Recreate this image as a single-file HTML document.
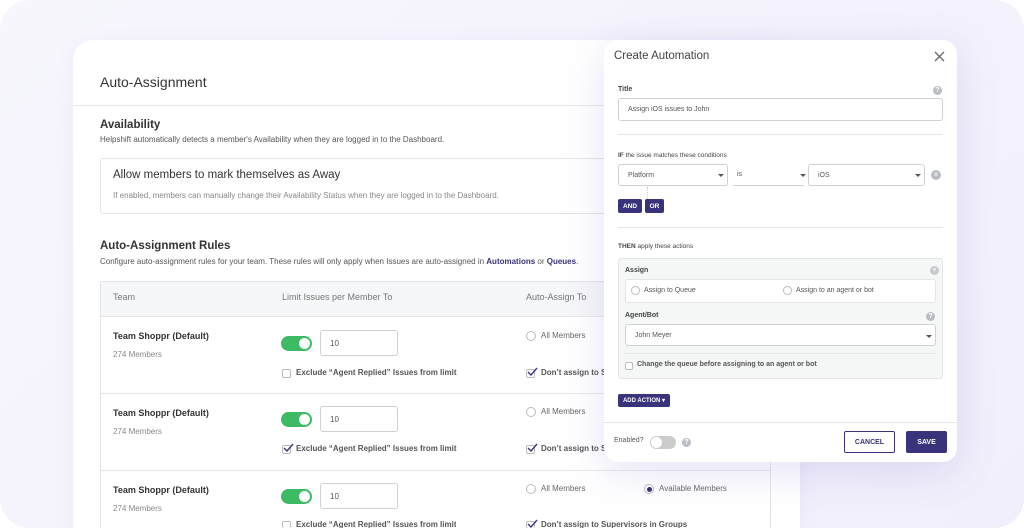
<!DOCTYPE html>
<html><head><meta charset="utf-8"><style>
*{box-sizing:border-box;margin:0;padding:0}
html,body{width:1024px;height:528px;overflow:hidden}
body{background:#fff;font-family:"Liberation Sans",sans-serif;position:relative;color:#333}
#root{position:absolute;left:0;top:0;width:1024px;height:528px;overflow:hidden}
.bg{position:absolute;left:0;top:0;width:1024px;height:528px;border-radius:30px;background:linear-gradient(135deg,#f7f6fd,#f1effb)}
.card{position:absolute;left:73px;top:40px;width:727px;height:488px;background:#fff;border-radius:20px 20px 0 0;box-shadow:0 4px 20px rgba(120,110,200,.08);overflow:hidden}
.a{position:absolute;white-space:nowrap}
.h1{font-size:14px;color:#333}
.h2{font-size:11.5px;color:#333;font-weight:bold}
.sm{font-size:8px;color:#555}
.gray{color:#888}
.line{position:absolute;height:1px;background:#e6e6e9}
.tog{position:absolute;width:31px;height:15px;border-radius:8px;background:#3dbb64}
.tog:after{content:"";position:absolute;right:2px;top:2px;width:11px;height:11px;border-radius:50%;background:#fff}
.inp{position:absolute;border:1px solid #cfd1d4;border-radius:3px;background:#fff;font-size:8px;color:#555;padding-left:9px;display:flex;align-items:center}
.cb{position:absolute;width:9px;height:9px;border:1px solid #bbb;border-radius:2px;background:#fff}
.ck{position:absolute;width:11px;height:9px}
.rd{position:absolute;width:10px;height:10px;border:1px solid #bbb;border-radius:50%;background:#fff}
.t8{font-size:8px;color:#444}
.modal{position:absolute;left:604px;top:40px;width:353px;height:422px;background:#fff;border-radius:14px;box-shadow:0 10px 40px rgba(110,100,200,.18)}
.btn{position:absolute;background:#38337a;color:#fff;font-size:6.5px;font-weight:bold;display:flex;align-items:center;justify-content:center;border-radius:2px}
.caret{position:absolute;width:0;height:0;border-left:3px solid transparent;border-right:3px solid transparent;border-top:3px solid #555}
.q{position:absolute;width:9px;height:9px;border-radius:50%;background:#b9bec4;color:#fff;font-size:7px;font-weight:bold;text-align:center;line-height:9px}
</style></head><body>
<div id="root">
<div class="bg"></div>
<div class="card">
 <div class="a h1" style="left:27px;top:34px">Auto-Assignment</div>
 <div class="line" style="left:0;top:65px;width:727px"></div>
 <div class="a h2" style="left:27px;top:79px">Availability</div>
 <div class="a sm" style="left:27px;top:95px">Helpshift automatically detects a member's Availability when they are logged in to the Dashboard.</div>
 <div style="position:absolute;left:27px;top:118px;width:690px;height:56px;border:1px solid #e2e3e6;border-radius:3px"></div>
 <div class="a" style="left:40px;top:129px;font-size:11.5px;color:#333">Allow members to mark themselves as Away</div>
 <div class="a sm gray" style="left:40px;top:151px">If enabled, members can manually change their Availability Status when they are logged in to the Dashboard.</div>
 <div class="a h2" style="left:27px;top:200px">Auto-Assignment Rules</div>
 <div class="a sm" style="left:27px;top:217px">Configure auto-assignment rules for your team. These rules will only apply when Issues are auto-assigned in <b style="color:#38337a">Automations</b> or <b style="color:#38337a">Queues</b>.</div>
 <div style="position:absolute;left:27px;top:241px;width:671px;height:260px;border:1px solid #e2e3e6;border-radius:3px"></div>
 <div style="position:absolute;left:28px;top:242px;width:669px;height:35px;background:#f6f7f8;border-bottom:1px solid #e6e6e9"></div>
 <div class="a" style="left:40px;top:252px;font-size:9px;color:#777">Team</div>
 <div class="a" style="left:209px;top:252px;font-size:9px;color:#777">Limit Issues per Member To</div>
 <div class="a" style="left:453px;top:252px;font-size:9px;color:#777">Auto-Assign To</div>
 <div class="line" style="left:28px;top:353px;width:669px"></div>
 <div class="line" style="left:28px;top:430px;width:669px"></div>
</div>
<svg width="0" height="0" style="position:absolute"><defs><symbol id="ck" viewBox="0 0 11 9"><path d="M1 5L4 8L10 1" fill="none" stroke="#3a3580" stroke-width="1.4"/></symbol></defs></svg>
 <div class="a" style="left:113px;top:331px;font-size:9px;font-weight:bold;color:#333">Team Shoppr (Default)</div>
 <div class="a" style="left:113px;top:350px;font-size:8px;color:#888">274 Members</div>
 <div class="tog" style="left:281px;top:336px"></div>
 <div class="inp" style="left:320px;top:330px;width:78px;height:26px">10</div>
 <div class="cb" style="left:282px;top:369px"></div>
 <div class="a t8" style="left:296px;top:368px;font-weight:bold;color:#555">Exclude “Agent Replied” Issues from limit</div>
 <div class="rd" style="left:526px;top:331px"></div>
 <div class="a t8" style="left:541px;top:331px;color:#666">All Members</div>
 <div class="cb" style="left:526px;top:369px"></div><svg class="ck" style="left:527px;top:367px"><use href="#ck"/></svg>
 <div class="a t8" style="left:541px;top:368px;font-weight:bold;color:#555">Don’t assign to S</div>

 <div class="a" style="left:113px;top:408px;font-size:9px;font-weight:bold;color:#333">Team Shoppr (Default)</div>
 <div class="a" style="left:113px;top:427px;font-size:8px;color:#888">274 Members</div>
 <div class="tog" style="left:281px;top:412px"></div>
 <div class="inp" style="left:320px;top:406px;width:78px;height:26px">10</div>
 <div class="cb" style="left:282px;top:445px"></div><svg class="ck" style="left:283px;top:443px"><use href="#ck"/></svg>
 <div class="a t8" style="left:296px;top:444px;font-weight:bold;color:#555">Exclude “Agent Replied” Issues from limit</div>
 <div class="rd" style="left:526px;top:407px"></div>
 <div class="a t8" style="left:541px;top:407px;color:#666">All Members</div>
 <div class="cb" style="left:526px;top:445px"></div><svg class="ck" style="left:527px;top:443px"><use href="#ck"/></svg>
 <div class="a t8" style="left:541px;top:444px;font-weight:bold;color:#555">Don’t assign to S</div>

 <div class="a" style="left:113px;top:485px;font-size:9px;font-weight:bold;color:#333">Team Shoppr (Default)</div>
 <div class="a" style="left:113px;top:504px;font-size:8px;color:#888">274 Members</div>
 <div class="tog" style="left:281px;top:489px"></div>
 <div class="inp" style="left:320px;top:483px;width:78px;height:26px">10</div>
 <div class="cb" style="left:282px;top:521px;height:7px;border-bottom:none"></div>
 <div class="a t8" style="left:296px;top:520px;font-weight:bold;color:#555;height:8px;overflow:hidden;line-height:10px">Exclude “Agent Replied” Issues from limit</div>
 <div class="rd" style="left:526px;top:484px"></div>
 <div class="a t8" style="left:541px;top:484px;color:#666">All Members</div>
 <div class="rd" style="left:644px;top:484px"></div><div style="position:absolute;left:647px;top:487px;width:5px;height:5px;border-radius:50%;background:#38337a"></div>
 <div class="a t8" style="left:659px;top:484px;color:#666">Available Members</div>
 <div class="cb" style="left:526px;top:521px;height:7px;border-bottom:none"></div><svg class="ck" style="left:527px;top:519px;height:9px"><use href="#ck"/></svg>
 <div class="a t8" style="left:541px;top:520px;font-weight:bold;color:#555;height:8px;overflow:hidden;line-height:10px">Don’t assign to Supervisors in Groups</div>
<div class="modal">
 <div class="a" style="left:10px;top:10px;font-size:11.5px;color:#444">Create Automation</div>
 <svg style="position:absolute;left:330px;top:11px" width="11" height="11"><path d="M1 1L10 10M10 1L1 10" stroke="#666" stroke-width="1.3"/></svg>
 <div class="a" style="left:14px;top:46px;font-size:7px;font-weight:bold;color:#444">Title</div>
 <div class="q" style="left:329px;top:46px">?</div>
 <div class="inp" style="left:14px;top:58px;width:325px;height:23px;font-size:7px">Assign iOS issues to John</div>
 <div class="line" style="left:14px;top:94px;width:325px"></div>
 <div class="a" style="left:14px;top:112px;font-size:6.5px;color:#444"><b>IF</b> the issue matches these conditions</div>
 <div class="inp" style="left:14px;top:124px;width:110px;height:22px;font-size:7px">Platform</div><div class="caret" style="left:114px;top:134px"></div>
 <div style="position:absolute;left:129px;top:124px;width:71px;height:22px;border-bottom:1px solid #cfd1d4"></div>
 <div class="a" style="left:133px;top:131px;font-size:7px;color:#555">is</div><div class="caret" style="left:196px;top:134px"></div>
 <div class="inp" style="left:204px;top:124px;width:117px;height:22px;font-size:7px">iOS</div><div class="caret" style="left:311px;top:134px"></div>
 <div style="position:absolute;left:327px;top:130px;width:10px;height:10px;border-radius:50%;background:#b9bec4;color:#fff;font-size:8px;line-height:10px;text-align:center">×</div>
 <div style="position:absolute;left:43px;top:147px;height:12px;border-left:1px dotted #ccc"></div>
 <div class="btn" style="left:14px;top:159px;width:24px;height:14px">AND</div>
 <div class="btn" style="left:41px;top:159px;width:19px;height:14px">OR</div>
 <div class="line" style="left:14px;top:187px;width:325px"></div>
 <div class="a" style="left:14px;top:203px;font-size:6.5px;color:#444"><b>THEN</b> apply these actions</div>
 <div style="position:absolute;left:14px;top:218px;width:325px;height:121px;background:#f5f6f6;border:1px solid #e3e5e6;border-radius:3px"></div>
 <div class="a" style="left:21px;top:227px;font-size:7px;font-weight:bold;color:#444">Assign</div>
 <div style="position:absolute;left:326px;top:226px;width:9px;height:9px;border-radius:50%;background:#c6cacf;color:#fff;font-size:7px;line-height:9px;text-align:center">×</div>
 <div style="position:absolute;left:21px;top:239px;width:311px;height:24px;background:#fff;border:1px solid #e3e5e6;border-radius:3px"></div>
 <div class="rd" style="left:27px;top:246px;width:9px;height:9px"></div><div class="a" style="left:40px;top:247px;font-size:7px;color:#555">Assign to Queue</div>
 <div class="rd" style="left:179px;top:246px;width:9px;height:9px"></div><div class="a" style="left:192px;top:247px;font-size:7px;color:#555">Assign to an agent or bot</div>
 <div class="a" style="left:21px;top:272px;font-size:7px;font-weight:bold;color:#444">Agent/Bot</div>
 <div class="q" style="left:322px;top:272px">?</div>
 <div class="inp" style="left:21px;top:284px;width:311px;height:22px;font-size:7px">John Meyer</div><div class="caret" style="left:322px;top:295px"></div>
 <div class="line" style="left:21px;top:313px;width:311px"></div>
 <div class="cb" style="left:21px;top:322px;width:8px;height:8px"></div>
 <div class="a" style="left:33px;top:321px;font-size:7px;font-weight:bold;color:#555">Change the queue before assigning to an agent or bot</div>
 <div class="btn" style="left:14px;top:354px;width:52px;height:13px;font-size:6px">ADD ACTION ▾</div>
 <div class="line" style="left:0;top:382px;width:353px"></div>
 <div class="a" style="left:10px;top:397px;font-size:7px;color:#555">Enabled?</div>
 <div style="position:absolute;left:46px;top:396px;width:26px;height:13px;border-radius:7px;background:#c9cbcd"><div style="position:absolute;left:1px;top:1px;width:11px;height:11px;border-radius:50%;background:#fff"></div></div>
 <div class="q" style="left:78px;top:398px">?</div>
 <div style="position:absolute;left:240px;top:391px;width:51px;height:22px;border:1px solid #38337a;border-radius:2px;color:#38337a;font-size:7px;font-weight:bold;display:flex;align-items:center;justify-content:center">CANCEL</div>
 <div class="btn" style="left:302px;top:391px;width:41px;height:22px;font-size:7px">SAVE</div>
</div>
</div>
</body></html>
